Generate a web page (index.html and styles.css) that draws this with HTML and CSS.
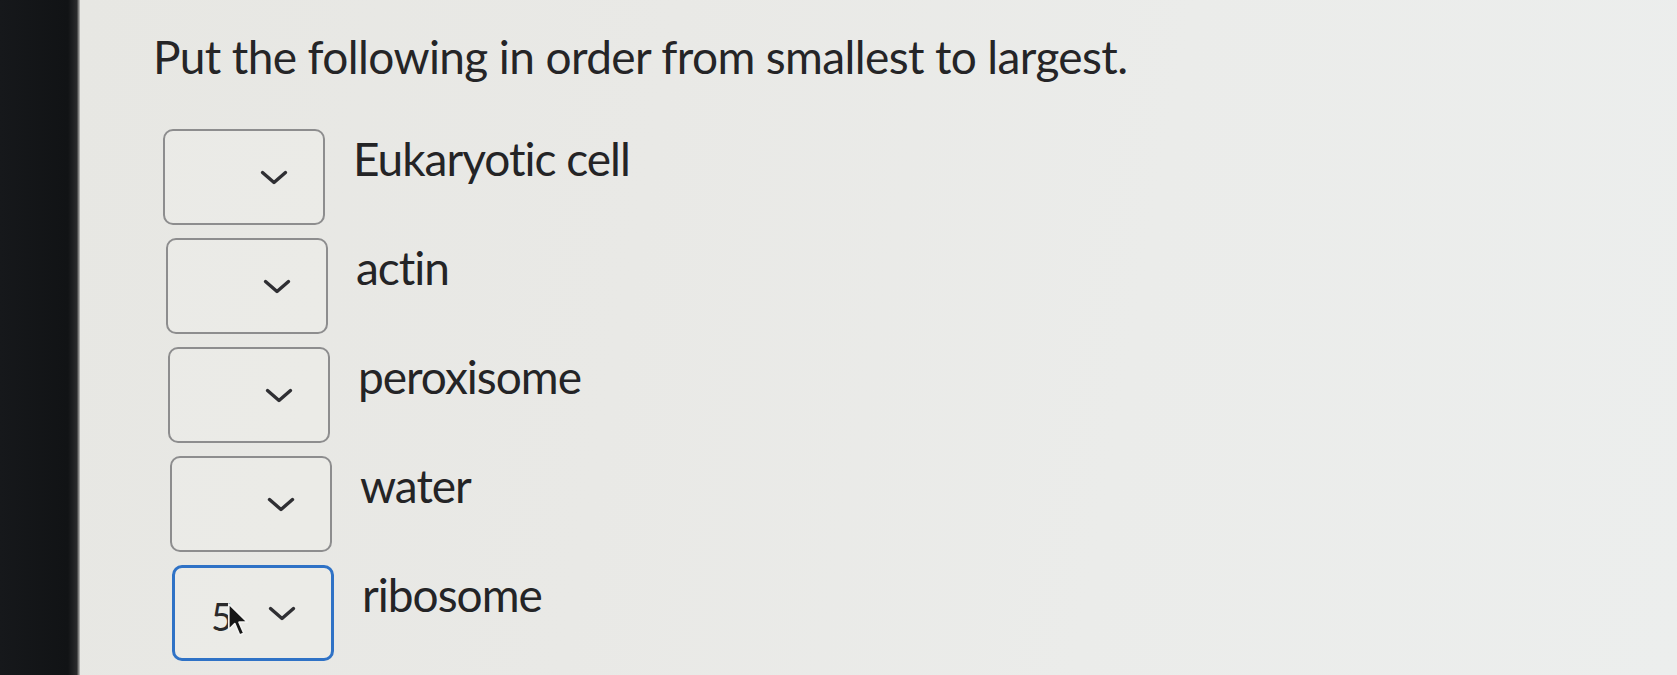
FILE: index.html
```html
<!DOCTYPE html>
<html lang="en">
<head>
<meta charset="utf-8">
<title>Order question</title>
<link rel="stylesheet" href="styles.css">
</head>
<body>
<div class="screen">
  <div class="bezel"></div>
  <main class="content">
    <h1 class="prompt">Put the following in order from smallest to largest.</h1>
    <div class="list">
      <div class="row r1">
        <div class="select"><span class="value"></span><svg class="chev" viewBox="0 0 28 15"><path d="M2.5 2.5 L14 12.5 L25.5 2.5"/></svg></div>
        <div class="label">Eukaryotic cell</div>
      </div>
      <div class="row r2">
        <div class="select"><span class="value"></span><svg class="chev" viewBox="0 0 28 15"><path d="M2.5 2.5 L14 12.5 L25.5 2.5"/></svg></div>
        <div class="label">actin</div>
      </div>
      <div class="row r3">
        <div class="select"><span class="value"></span><svg class="chev" viewBox="0 0 28 15"><path d="M2.5 2.5 L14 12.5 L25.5 2.5"/></svg></div>
        <div class="label">peroxisome</div>
      </div>
      <div class="row r4">
        <div class="select"><span class="value"></span><svg class="chev" viewBox="0 0 28 15"><path d="M2.5 2.5 L14 12.5 L25.5 2.5"/></svg></div>
        <div class="label">water</div>
      </div>
      <div class="row r5">
        <div class="select focused"><span class="value">5<svg class="cursor" viewBox="0 0 20 30"><path d="M1.5 1.5 L1.5 23 L6.5 18 L10.5 27.5 L14 26 L10 16.8 L17 16.8 Z"/></svg></span><svg class="chev" viewBox="0 0 28 15"><path d="M2.5 2.5 L14 12.5 L25.5 2.5"/></svg></div>
        <div class="label">ribosome</div>
      </div>
    </div>
  </main>
</div>
</body>
</html>
```
FILE: styles.css
```css
* { box-sizing: border-box; }
html, body { margin: 0; padding: 0; }
body {
  width: 1677px;
  height: 675px;
  overflow: hidden;
  font-family: Lato, "Open Sans", sans-serif;
  font-variant-ligatures: none;
  color: #232325;
}
.screen {
  display: flex;
  width: 100%;
  height: 100%;
}
.bezel {
  width: 80px;
  flex: none;
  background: linear-gradient(90deg, #16181b 0%, #111315 85%, #2a2b2c 96%, #c4c4c1 100%);
}
.content {
  flex: 1;
  padding: 29px 0 0 73px;
  background: linear-gradient(100deg, #e7e7e3 0%, #e9e9e6 35%, #ebecea 65%, #eceeed 100%);
}
.prompt {
  margin: 0;
  font-size: 46px;
  line-height: 56px;
  font-weight: 400;
  letter-spacing: -0.62px;
  color: #252527;
}
.list {
  margin-top: 44px;
  display: flex;
  flex-direction: column;
  gap: 13px;
}
.row {
  display: flex;
  align-items: flex-start;
  gap: 28px;
  padding-left: 10px;
}
.r2 { padding-left: 13px; }
.r3 { padding-left: 15px; }
.r4 { padding-left: 17px; }
.r5 { padding-left: 19px; }
.select {
  width: 162px;
  height: 96px;
  border: 2px solid #8d8d8e;
  border-radius: 10px;
  display: flex;
  align-items: center;
  padding: 0 35px 0 36px;
  background: rgba(236, 236, 233, 0.55);
  flex: none;
}
.select.focused {
  border: 3px solid #2f72c6;
}
.value {
  flex: 1;
  position: relative;
  font-size: 38px;
  line-height: 44px;
  color: #2a2a2c;
  padding-top: 6px;
}
.chev {
  width: 28px;
  height: 15px;
  flex: none;
}
.chev path {
  fill: none;
  stroke: #2f2f33;
  stroke-width: 3.4;
  stroke-linecap: round;
  stroke-linejoin: round;
}
.cursor {
  position: absolute;
  left: 16px;
  top: 14px;
  width: 24px;
  height: 36px;
}
.cursor path {
  fill: #161616;
  stroke: #f2f2f0;
  stroke-width: 1.4;
  stroke-linejoin: round;
}
.label {
  font-size: 46px;
  line-height: 58px;
  letter-spacing: -1px;
  color: #242426;
  padding-top: 1px;
}
```
